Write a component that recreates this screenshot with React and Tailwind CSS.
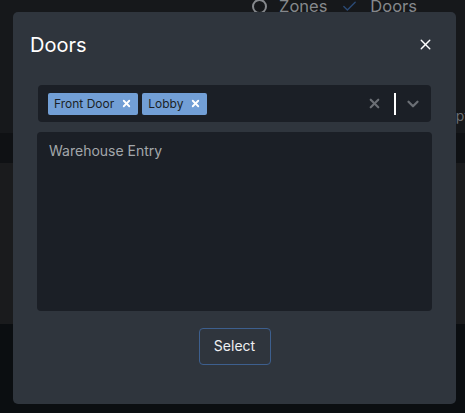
import { X, ChevronDown, Check } from 'lucide-react';

const FONT = { fontFamily: 'Inter, "Noto Sans", sans-serif' };

function Chip({ label }) {
  return (
    <span className="flex h-[22px] items-center gap-[7px] rounded-[2px] bg-[#729fd6] pl-[6px] pr-[6px] text-[12px] text-[#1b1f26]">
      {label}
      <X size={11} strokeWidth={4} className="text-white" />
    </span>
  );
}

function DoorsModal() {
  return (
    <div className="absolute left-[13px] top-[12px] flex h-[392px] w-[443px] flex-col rounded-[5px] bg-[#2f353d]">
      <div className="flex h-[64px] items-center justify-between pl-[17px] pr-[22px] pt-[1px]">
        <h2 className="text-[20px] font-normal text-white">Doors</h2>
        <X size={17} strokeWidth={2} className="text-white" />
      </div>

      <div className="mx-[25px] mt-[9px] flex h-[37px] items-center rounded-[4px] bg-[#1b1f26] pl-[10px] pr-[9px]">
        <div className="flex flex-1 gap-[4px]">
          <Chip label="Front Door" />
          <Chip label="Lobby" />
        </div>
        <X size={15} strokeWidth={3.5} className="mr-[12px] text-[#6b6f75]" />
        <div className="h-[22px] w-[2px] bg-white" />
        <ChevronDown size={18} strokeWidth={3} className="ml-[8px] text-[#6b6f75]" />
      </div>

      <div className="mx-[24px] mt-[10px] h-[179px] rounded-[4px] bg-[#1b1f26] px-[12px] py-[8px]">
        <div className="text-[14px] text-[#a3a7ab]">Warehouse Entry</div>
      </div>

      <div className="mt-[17px] flex justify-center">
        <button
          type="button"
          className="h-[37px] w-[72px] rounded-[4px] border border-[#3d5f8e] pb-[2px] text-[14px] text-[#eef0f2]"
        >
          Select
        </button>
      </div>
    </div>
  );
}

export default function App() {
  return (
    <div className="relative h-[413px] w-[465px] overflow-hidden bg-[#0b0e11]" style={FONT}>
      <div className="flex h-[133px] flex-col bg-[#16181b]">
        <div className="-mt-[6px] ml-[252px] flex items-center gap-[12px] text-[16.5px] text-[#85888c]">
          <span className="h-[15px] w-[15px] rounded-full border-2 border-[#85888c]" />
          <span>Zones</span>
          <Check size={17} strokeWidth={2} className="ml-[2px] text-[#2b4a75]" />
          <span>Doors</span>
        </div>
        <div className="ml-auto mt-[86px] text-[14px] text-[#6a6d71]">
          <span className="relative left-[4px]">pt</span>
        </div>
      </div>
      <div className="h-[30px] bg-[#0f1114]" />
      <div className="h-[161px] bg-[#1a1b1d]" />
      <DoorsModal />
    </div>
  );
}
